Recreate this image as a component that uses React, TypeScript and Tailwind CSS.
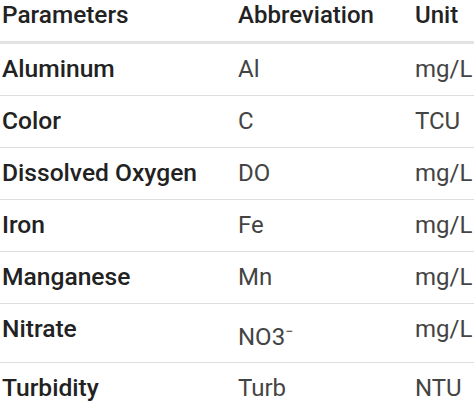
const rows = [
  { name: "Aluminum", abbr: "Al", unit: "mg/L" },
  { name: "Color", abbr: "C", unit: "TCU" },
  { name: "Dissolved Oxygen", abbr: "DO", unit: "mg/L" },
  { name: "Iron", abbr: "Fe", unit: "mg/L" },
  { name: "Manganese", abbr: "Mn", unit: "mg/L" },
];

export default function App() {
  return (
    <div className="w-[474px] h-[402px] overflow-hidden bg-white font-['Roboto',sans-serif] text-[24px] leading-[28px]">
      {/* header */}
      <div className="flex pt-px pb-[12px] border-b-[3px] border-[#e3e3e3] font-medium text-[#222]">
        <div className="w-[238px] pl-[2px] text-[24.4px]">Parameters</div>
        <div className="w-[177px]">Abbreviation</div>
        <div className="flex-1">Unit</div>
      </div>

      {rows.map((r) => (
        <div key={r.name} className="flex pt-[11px] pb-[12px] border-b border-[#dedede]">
          <div className="w-[238px] pl-[2px] text-[24.6px] font-medium text-[#222]">{r.name}</div>
          <div className="w-[177px] text-[#444]">{r.abbr}</div>
          <div className="flex-1 whitespace-nowrap text-[#444]">{r.unit}</div>
        </div>
      ))}

      <div className="flex pt-[11px] pb-[11px] border-b border-[#dedede]">
        <div className="w-[238px] pl-[2px] text-[24.6px] font-medium text-[#222]">Nitrate</div>
        <div className="w-[177px] pt-[8px] text-[#444]">
          NO3<span className="align-super text-[14px] leading-none">−</span>
        </div>
        <div className="flex-1 whitespace-nowrap text-[#444]">mg/L</div>
      </div>

      <div className="flex pt-[11px] pb-[12px]">
        <div className="w-[238px] pl-[2px] text-[24.6px] font-medium text-[#222]">Turbidity</div>
        <div className="w-[177px] text-[#444]">Turb</div>
        <div className="flex-1 whitespace-nowrap text-[#444]">NTU</div>
      </div>
    </div>
  );
}
